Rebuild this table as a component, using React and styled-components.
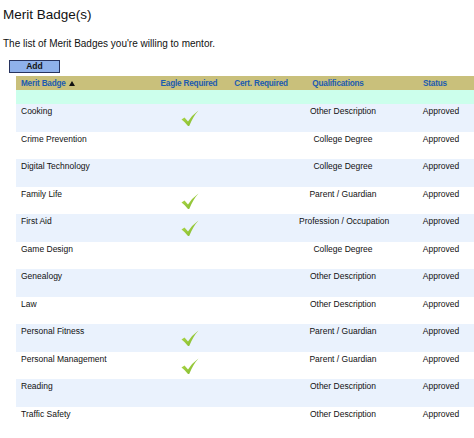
import styled, { createGlobalStyle } from "styled-components";

const GlobalStyle = createGlobalStyle`
  html, body {
    margin: 0;
    padding: 0;
    overflow: hidden;
    background: #fff;
    font-family: "Liberation Sans", Arial, sans-serif;
    color: #111;
  }
`;

const badges = [
  { name: "Cooking", eagle: true, qual: "Other Description" },
  { name: "Crime Prevention", eagle: false, qual: "College Degree" },
  { name: "Digital Technology", eagle: false, qual: "College Degree" },
  { name: "Family Life", eagle: true, qual: "Parent / Guardian" },
  { name: "First Aid", eagle: true, qual: "Profession / Occupation" },
  { name: "Game Design", eagle: false, qual: "College Degree" },
  { name: "Genealogy", eagle: false, qual: "Other Description" },
  { name: "Law", eagle: false, qual: "Other Description" },
  { name: "Personal Fitness", eagle: true, qual: "Parent / Guardian" },
  { name: "Personal Management", eagle: true, qual: "Parent / Guardian" },
  { name: "Reading", eagle: false, qual: "Other Description" },
  { name: "Traffic Safety", eagle: false, qual: "Other Description" },
];

const Check = () => (
  <svg width="18" height="17" viewBox="0 0 18 17">
    <defs>
      <linearGradient id="chk" x1="0" y1="0" x2="1" y2="1">
        <stop offset="0" stopColor="#b5dc4a" />
        <stop offset="1" stopColor="#7db72f" />
      </linearGradient>
    </defs>
    <path
      d="M0.5 9.5 L3.5 7.5 L7 11.5 Q11 5 17.5 0.5 Q12 6.5 8.2 16 L7 16 Q4 12 0.5 9.5 Z"
      fill="url(#chk)"
    />
  </svg>
);

const App = () => (
  <Page>
    <GlobalStyle />
    <Title>Merit Badge(s)</Title>
    <Intro>The list of Merit Badges you're willing to mentor.</Intro>
    <AddButton>Add</AddButton>
    <Table>
      <HeaderRow>
        <HeadCell $align="left">
          Merit Badge <SortArrow />
        </HeadCell>
        <HeadCell>Eagle Required</HeadCell>
        <HeadCell>Cert. Required</HeadCell>
        <HeadCell $shift={-5}>Qualifications</HeadCell>
        <HeadCell $shift={-6}>Status</HeadCell>
      </HeaderRow>
      <FilterRow />
      {badges.map((b, i) => (
        <Row key={b.name} $alt={i % 2 === 0}>
          <Cell $align="left">{b.name}</Cell>
          <Cell>{b.eagle && <CheckWrap><Check /></CheckWrap>}</Cell>
          <Cell />
          <Cell>{b.qual}</Cell>
          <Cell>Approved</Cell>
        </Row>
      ))}
    </Table>
  </Page>
);

export default App;

//#region Styled Objects
const Page = styled.div`
  width: 474px;
  height: 438px;
  overflow: hidden;
`;

const Title = styled.h1`
  margin: 0;
  padding: 7px 0 0 3px;
  height: 16px;
  font-size: 13.5px;
  line-height: 16px;
  font-weight: normal;
`;

const Intro = styled.p`
  margin: 0;
  padding: 15px 0 0 3px;
  font-size: 10px;
  line-height: 12px;
`;

const AddButton = styled.button`
  display: block;
  margin: 10px 0 0 9px;
  width: 51px;
  height: 13px;
  padding: 0;
  background: #8fb1ea;
  border: 1px solid #27335e;
  font-family: inherit;
  font-size: 8.5px;
  font-weight: bold;
  line-height: 11px;
  color: #111;
`;

const Table = styled.div`
  margin: 3px 0 0 16px;
  width: 479px;
`;

const columns = "139px 68px 76px 88px 108px";

const HeaderRow = styled.div`
  display: grid;
  grid-template-columns: ${columns};
  height: 14px;
  background: #c9c07b;
  align-items: center;
`;

const HeadCell = styled.div`
  text-align: ${(p) => p.$align || "center"};
  padding-left: ${(p) => (p.$align === "left" ? "5px" : "0")};
  transform: translateX(${(p) => p.$shift || 0}px);
  font-size: 8.2px;
  font-weight: bold;
  letter-spacing: -0.2px;
  color: #1c5bb0;
  white-space: nowrap;
`;

const SortArrow = styled.span`
  display: inline-block;
  width: 0;
  height: 0;
  margin-left: 1px;
  border-left: 3px solid transparent;
  border-right: 3px solid transparent;
  border-bottom: 5px solid #111;
`;

const FilterRow = styled.div`
  height: 14px;
  background: #ccffec;
`;

const Row = styled.div`
  display: grid;
  grid-template-columns: ${columns};
  height: 27.5px;
  background: ${(p) => (p.$alt ? "#eaf2fd" : "#fff")};
  align-items: start;
`;

const Cell = styled.div`
  text-align: ${(p) => p.$align || "center"};
  padding: 2px 0 0 ${(p) => (p.$align === "left" ? "5px" : "0")};
  font-size: 8.5px;
  line-height: 10px;
  white-space: nowrap;
  color: #111;
`;

const CheckWrap = styled.div`
  display: flex;
  justify-content: center;
  padding: 4px 0 0 1px;
`;
//#endregion
